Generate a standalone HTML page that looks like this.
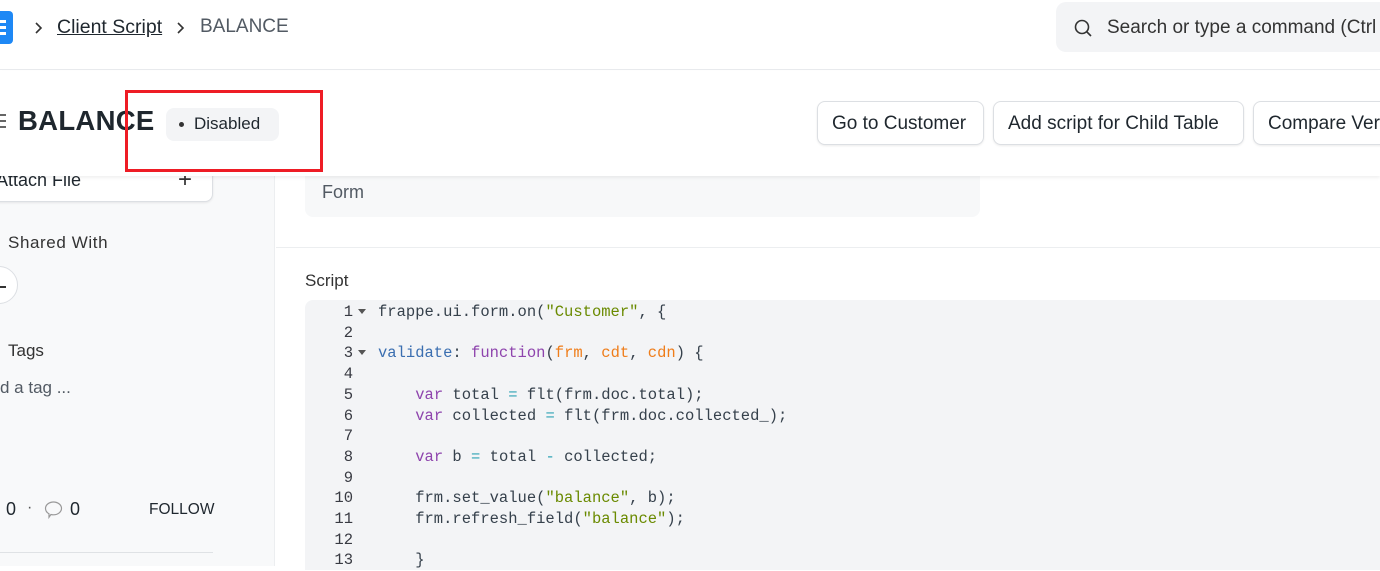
<!DOCTYPE html>
<html><head><meta charset="utf-8"><style>
*{box-sizing:border-box;margin:0;padding:0}
body{width:1380px;height:566px;overflow:hidden;background:#fff;font-family:"Liberation Sans",sans-serif;color:#1f272e;position:relative}
.abs{position:absolute}
.code{font-family:"Liberation Mono",monospace;font-size:15.5px;line-height:20.7px;white-space:pre;color:#36414c}
.ln{position:absolute;left:305px;width:48px;text-align:right;color:#383a42}
.k{color:#8e44ad}.s{color:#6a8a00}.p{color:#ef7d1a}.b{color:#3a6eb0}.o{color:#2fa3b5}
.btn{position:absolute;top:101px;height:44px;border:1px solid #dcdfe3;border-radius:8px;background:#fff;font-size:19px;line-height:43px;padding:0 14px;color:#1f272e;box-shadow:0 1px 2px rgba(0,0,0,.08);white-space:nowrap;overflow:hidden}
</style></head><body>
<div class="abs" style="left:0;top:0;width:1380px;height:70px;border-bottom:1px solid #e8eaed;background:#fff"></div>
<div class="abs" style="left:-10px;top:11px;width:23px;height:33px;background:#1e88f5;border-radius:4px"></div>
<div class="abs" style="left:0;top:20px;width:6px;height:15px;background:repeating-linear-gradient(#fff 0 3px,transparent 3px 6px)"></div>
<svg class="abs" style="left:33px;top:20px" width="12" height="16"><path d="M3 3l5 5-5 5" stroke="#333" stroke-width="1.6" fill="none"/></svg>
<div class="abs" style="left:57px;top:16px;font-size:19.5px;text-decoration:underline;color:#1f272e">Client Script</div>
<svg class="abs" style="left:175px;top:20px" width="12" height="16"><path d="M3 3l5 5-5 5" stroke="#333" stroke-width="1.6" fill="none"/></svg>
<div class="abs" style="left:200px;top:16px;font-size:19px;color:#525a63">BALANCE</div>
<div class="abs" style="left:1056px;top:2px;width:340px;height:50px;background:#f3f4f6;border-radius:10px"></div>
<svg class="abs" style="left:1073px;top:18px" width="22" height="22"><circle cx="9" cy="9" r="6.5" stroke="#333" stroke-width="1.6" fill="none"/><path d="M14 14l4 4" stroke="#333" stroke-width="1.6"/></svg>
<div class="abs" style="left:1107px;top:17px;font-size:19px;color:#333;white-space:nowrap">Search or type a command (Ctrl</div>
<div class="abs" style="left:0;top:176px;width:275px;height:390px;background:#f8f9fa;border-right:1px solid #eceef0"></div>
<div class="abs" style="left:-10px;top:160px;width:223px;height:42px;background:#fff;border:1px solid #dcdfe3;border-radius:8px;box-shadow:0 1px 2px rgba(0,0,0,.08)"></div>
<div class="abs" style="left:-4px;top:170px;font-size:18px;color:#1f272e">Attach File</div>
<div class="abs" style="left:178px;top:166px;font-size:24px;font-weight:300;color:#333">+</div>
<div class="abs" style="left:8px;top:233px;font-size:17px;color:#333;letter-spacing:.6px">Shared With</div>
<div class="abs" style="left:-20px;top:266px;width:38px;height:38px;border-radius:50%;background:#fff;border:1px solid #dcdfe3"></div>
<div class="abs" style="left:0;top:286px;width:6px;height:1.5px;background:#333"></div>
<div class="abs" style="left:8px;top:341px;font-size:17px;color:#333">Tags</div>
<div class="abs" style="left:0;top:378px;font-size:17px;color:#525a63">d a tag ...</div>
<div class="abs" style="left:6px;top:499px;font-size:18px;color:#1f272e">0</div>
<div class="abs" style="left:27px;top:499px;font-size:16px;color:#555">·</div>
<svg class="abs" style="left:43px;top:499px" width="22" height="22"><path d="M10.5 3c4.4 0 8 2.9 8 6.4s-3.6 6.4-8 6.4c-.9 0-1.8-.1-2.6-.3l-1.9 2.7v-3.4C3.8 13.6 2.5 11.6 2.5 9.4 2.5 5.9 6.1 3 10.5 3z" stroke="#999" stroke-width="1.2" fill="none"/></svg>
<div class="abs" style="left:70px;top:499px;font-size:18px;color:#1f272e">0</div>
<div class="abs" style="left:149px;top:501px;font-size:15.5px;color:#1f272e">FOLLOW</div>
<div class="abs" style="left:0;top:552px;width:213px;height:1px;background:#dfe2e5"></div>
<div class="abs" style="left:305px;top:160px;width:675px;height:57px;background:#f7f8f9;border-radius:8px"></div>
<div class="abs" style="left:322px;top:182px;font-size:18px;color:#525a63">Form</div>
<div class="abs" style="left:276px;top:247px;width:1104px;height:1px;background:#eceef0"></div>
<div class="abs" style="left:305px;top:271px;font-size:17px;color:#333">Script</div>
<div class="abs" style="left:305px;top:300px;width:1080px;height:270px;background:#f3f4f6;border-radius:8px 0 0 0"></div>
<div class="code ln" style="top:302px">1
2
3
4
5
6
7
8
9
10
11
12
13</div>
<div class="abs" style="left:358px;top:309px;width:0;height:0;border-left:4px solid transparent;border-right:4px solid transparent;border-top:5px solid #555"></div>
<div class="abs" style="left:358px;top:350px;width:0;height:0;border-left:4px solid transparent;border-right:4px solid transparent;border-top:5px solid #555"></div>
<div class="code abs" style="left:378px;top:302px">frappe.ui.form.on(<span class="s">"Customer"</span>, {

<span class="b">validate</span>: <span class="k">function</span>(<span class="p">frm</span>, <span class="p">cdt</span>, <span class="p">cdn</span>) {

    <span class="k">var</span> total <span class="o">=</span> flt(frm.doc.total);
    <span class="k">var</span> collected <span class="o">=</span> flt(frm.doc.collected_);

    <span class="k">var</span> b <span class="o">=</span> total <span class="o">-</span> collected;

    frm.set_value(<span class="s">"balance"</span>, b);
    frm.refresh_field(<span class="s">"balance"</span>);

    }</div>
<div class="abs" style="left:0;top:71px;width:1380px;height:105px;background:#fff;box-shadow:0 2px 3px rgba(0,0,0,.06)"></div>
<div class="abs" style="left:0;top:114px;width:6px;height:16px;background:repeating-linear-gradient(#666 0 2px,transparent 2px 6px)"></div>
<div class="abs" style="left:18px;top:105px;font-size:27.5px;font-weight:bold;color:#1f272e;letter-spacing:.3px">BALANCE</div>
<div class="abs" style="left:166px;top:108px;width:113px;height:33px;background:#f3f4f6;border-radius:8px"></div>
<div class="abs" style="left:179px;top:122px;width:5px;height:5px;border-radius:50%;background:#333"></div>
<div class="abs" style="left:194px;top:114px;font-size:17px;color:#1f272e">Disabled</div>
<div class="abs" style="left:125px;top:90px;width:198px;height:82px;border:3px solid #ee1c25"></div>
<div class="btn" style="left:817px;width:167px">Go to Customer</div>
<div class="btn" style="left:993px;width:251px">Add script for Child Table</div>
<div class="btn" style="left:1253px;width:160px">Compare Versions</div>
</body></html>
